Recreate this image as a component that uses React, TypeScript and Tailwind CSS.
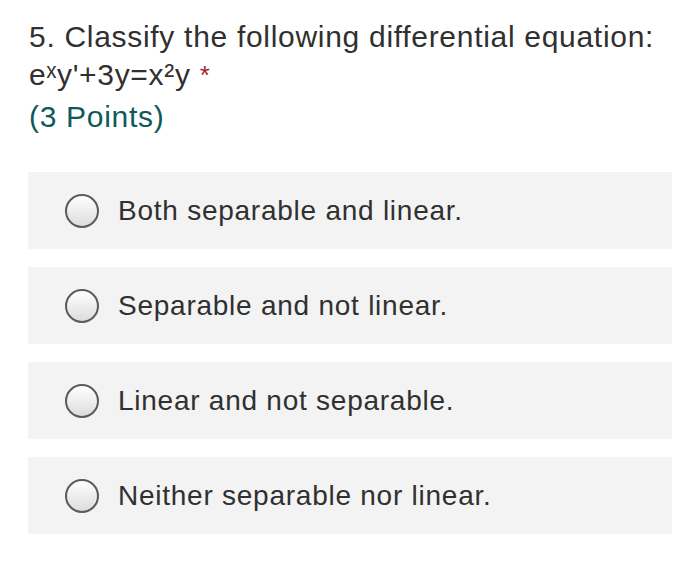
const OPTIONS = [
  'Both separable and linear.',
  'Separable and not linear.',
  'Linear and not separable.',
  'Neither separable nor linear.',
]

function Radio() {
  return (
    <span className="w-[34px] h-[34px] shrink-0 rounded-full border-2 border-[#5a5a5a] bg-gradient-to-b from-white to-[#dcdcdc]" />
  )
}

export default function App() {
  return (
    <div className="w-[700px] h-[582px] bg-white px-7 pt-[18px] font-['Liberation_Sans',Arial,sans-serif] text-[#303030]">
      <div className="pl-[1px] text-[30px] leading-[38px] tracking-[0.7px]">
        <div>5. Classify the following differential equation:</div>
        <div>
          eˣy'+3y=x²y <span className="text-[#a4262c] text-[26px] align-top">*</span>
        </div>
        <div className="mt-1 text-[#0e5a5a]">(3 Points)</div>
      </div>

      <div className="mt-9 flex flex-col gap-[18px]">
        {OPTIONS.map((opt) => (
          <div
            key={opt}
            className="h-[77px] bg-[#f3f3f3] flex items-center gap-[19px] pl-[37px]"
          >
            <Radio />
            <span className="text-[28px] tracking-[0.75px] leading-none">{opt}</span>
          </div>
        ))}
      </div>
    </div>
  )
}
